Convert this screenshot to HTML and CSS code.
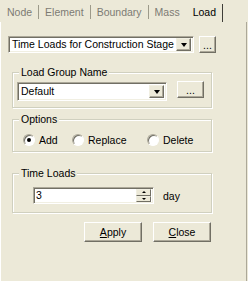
FILE: index.html
```html
<!DOCTYPE html>
<html lang="en">
<head>
    <meta charset="UTF-8">
    <title>Load</title>
    <link rel="stylesheet" href="styles.css">
</head>
<body>
    <div class="tabs">
        <span class="tab">Node</span>
        <span class="tab">Element</span>
        <span class="tab">Boundary</span>
        <span class="tab last">Mass</span>
        <span class="tab active">Load</span>
    </div>

    <div class="panel">
        <div class="row top">
            <div class="combo wide">
                <span class="combo-text">Time Loads for Construction Stage</span>
                <span class="drop"><i class="arrow"></i></span>
            </div>
            <button class="btn dots small">...</button>
        </div>

        <fieldset class="group g1">
            <legend>Load Group Name</legend>
            <div class="row">
                <div class="combo mid">
                    <span class="combo-text">Default</span>
                    <span class="drop"><i class="arrow"></i></span>
                </div>
                <button class="btn dots big">...</button>
            </div>
        </fieldset>

        <fieldset class="group g2">
            <legend>Options</legend>
            <div class="radios">
                <label class="opt"><span class="radio on"></span>Add</label>
                <label class="opt"><span class="radio"></span>Replace</label>
                <label class="opt"><span class="radio"></span>Delete</label>
            </div>
        </fieldset>

        <fieldset class="group g3">
            <legend>Time Loads</legend>
            <div class="row spin-row">
                <div class="spin">
                    <span class="spin-text">3</span>
                    <span class="spin-btns">
                        <span class="sb"><i class="up"></i></span>
                        <span class="sb"><i class="down"></i></span>
                    </span>
                </div>
                <span class="unit">day</span>
            </div>
        </fieldset>

        <div class="actions">
            <button class="btn act"><u>A</u>pply</button>
            <button class="btn act"><u>C</u>lose</button>
        </div>
    </div>
</body>
</html>
```

FILE: styles.css
```css
* {
    box-sizing: border-box;
}

body {
    margin: 0;
    width: 248px;
    height: 281px;
    background-color: #ece9d8;
    font-family: "Liberation Sans", Arial, sans-serif;
    font-size: 10.5px;
    color: #000;
    overflow: hidden;
}

/* tab strip */
.tabs {
    display: flex;
    align-items: flex-end;
    height: 22px;
    padding-left: 1px;
}

.tab {
    height: 14px;
    line-height: 14px;
    margin-bottom: 3px;
    padding: 0 6px;
    border-right: 1px solid #9d9a8a;
    color: #7c7b74;
}

.tab.last {
    border-right: none;
    padding-right: 8px;
}

.tab.active {
    height: 18px;
    line-height: 16px;
    margin-bottom: 0;
    padding: 0 6px 0 5px;
    color: #000;
    border-right: 1px solid #3f3e38;
}

.panel {
    height: 259px;
    width: 247px;
    border-left: 1px solid #fff;
    border-right: 1px solid #aca899;
    padding-top: 14px;
    padding-left: 7px;
}

.row {
    display: flex;
    align-items: flex-start;
}

/* sunken combo box */
.combo {
    display: flex;
    background: #fff;
    border: 1px solid;
    border-color: #aca899 #fff #fff #aca899;
    box-shadow: inset 1px 1px 0 #716f64, inset -1px -1px 0 #f1efe2;
    padding: 2px;
}

.combo.wide {
    width: 186px;
    height: 17px;
    padding: 1px 2px;
}

.combo.mid {
    width: 150px;
    height: 19px;
}

.combo-text {
    flex: 1;
    line-height: 13px;
    padding-left: 1px;
    white-space: nowrap;
    overflow: hidden;
}

.drop {
    display: flex;
    align-items: center;
    justify-content: center;
    width: 15px;
    background: #ece9d8;
    border: 1px solid;
    border-color: #f1efe2 #716f64 #716f64 #f1efe2;
    box-shadow: inset -1px -1px 0 #aca899;
}

.arrow {
    width: 0;
    height: 0;
    border-left: 3.5px solid transparent;
    border-right: 3.5px solid transparent;
    border-top: 4px solid #000;
}

/* raised button */
.btn {
    font-family: inherit;
    font-size: 10.5px;
    background: #ece9d8;
    border: 1px solid;
    border-color: #fff #716f64 #716f64 #fff;
    box-shadow: inset -1px -1px 0 #aca899;
    padding: 0;
    color: #000;
}

.dots {
    line-height: 10px;
}

.dots.small {
    width: 17px;
    height: 17px;
    margin-left: 5px;
}

.dots.big {
    width: 27px;
    height: 17px;
    margin-left: 10px;
    margin-top: -1px;
}

/* group boxes */
.group {
    margin: 0 0 0 4px;
    width: 200px;
    border: 1px solid #d0d0bf;
    box-shadow: 1px 1px 0 #fff, inset 1px 1px 0 #fff;
    padding: 0 4px;
}

.group legend {
    padding: 0 2px;
    margin-left: 2px;
    line-height: 13px;
    background: #ece9d8;
}

.g1 {
    margin-top: 13px;
    padding-top: 3px;
    padding-bottom: 6px;
}

.g2 {
    margin-top: 5px;
    padding-top: 7px;
    padding-bottom: 4px;
}

.radios {
    display: flex;
    padding-left: 6px;
}

.opt {
    display: flex;
    align-items: center;
    height: 14px;
}

.opt:nth-child(1) { width: 49px; }
.opt:nth-child(2) { width: 75px; }

.radio {
    width: 12px;
    height: 12px;
    border-radius: 50%;
    background: #fff;
    border: 1px solid;
    border-color: #aca899 #fff #fff #aca899;
    box-shadow: inset 1px 1px 0 #716f64;
    margin-right: 4px;
    position: relative;
}

.radio.on::after {
    content: "";
    position: absolute;
    left: 3px;
    top: 3px;
    width: 4px;
    height: 4px;
    border-radius: 50%;
    background: #000;
}

.g3 {
    margin-top: 15px;
    padding-top: 7px;
    padding-bottom: 8px;
}

.spin-row {
    align-items: center;
    padding-left: 16px;
}

.spin {
    display: flex;
    width: 121px;
    height: 17px;
    background: #fff;
    border: 1px solid;
    border-color: #aca899 #fff #fff #aca899;
    box-shadow: inset 1px 1px 0 #716f64, inset -1px -1px 0 #f1efe2;
    padding: 1px 2px;
}

.spin-text {
    flex: 1;
    line-height: 13px;
}

.spin-btns {
    display: flex;
    flex-direction: column;
    width: 15px;
}

.sb {
    flex: 1;
    display: flex;
    align-items: center;
    justify-content: center;
    background: #ece9d8;
    border: 1px solid;
    border-color: #f1efe2 #716f64 #716f64 #f1efe2;
}

.up, .down {
    width: 0;
    height: 0;
    border-left: 2px solid transparent;
    border-right: 2px solid transparent;
}

.up { border-bottom: 2px solid #000; }
.down { border-top: 2px solid #000; }

.unit {
    margin-left: 9px;
}

.actions {
    display: flex;
    gap: 11px;
    margin-top: 9px;
    padding-left: 76px;
}

.act {
    width: 58px;
    height: 20px;
}
```
